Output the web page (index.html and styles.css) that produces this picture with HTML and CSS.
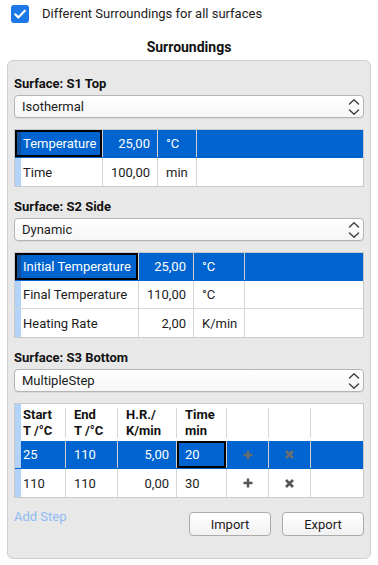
FILE: index.html
```html
<!DOCTYPE html>
<html>
<head>
<meta charset="utf-8">
<link rel="stylesheet" href="styles.css">
</head>
<body>
<div class="top">
  <span class="check"><svg width="18" height="18" viewBox="0 0 18 18"><path d="M4.2 9.3l3.1 3.1 6.5-6.6" fill="none" stroke="#fff" stroke-width="2.2" stroke-linecap="round" stroke-linejoin="round"/></svg></span>
  <span class="check-label">Different Surroundings for all surfaces</span>
</div>
<div class="title">Surroundings</div>
<div class="panel">
  <div class="heading first">Surface: S1 Top</div>
  <div class="select"><span>Isothermal</span><svg class="arrows" width="12" height="18" viewBox="0 0 12 18"><path d="M1.5 6l4.5-4.2 4.5 4.2M1.5 12l4.5 4.2 4.5-4.2" fill="none" stroke="#444" stroke-width="1.5" stroke-linecap="round" stroke-linejoin="round"/></svg></div>
  <div class="table t1">
    <div class="row sel">
      <div class="ind focus-l"></div>
      <div class="cell first focus-r">Temperature</div>
      <div class="cell num">25,00</div>
      <div class="cell">°C</div>
      <div class="cell last"></div>
    </div>
    <div class="row">
      <div class="ind"></div>
      <div class="cell first">Time</div>
      <div class="cell num">100,00</div>
      <div class="cell">min</div>
      <div class="cell last"></div>
    </div>
  </div>

  <div class="heading">Surface: S2 Side</div>
  <div class="select"><span>Dynamic</span><svg class="arrows" width="12" height="18" viewBox="0 0 12 18"><path d="M1.5 6l4.5-4.2 4.5 4.2M1.5 12l4.5 4.2 4.5-4.2" fill="none" stroke="#444" stroke-width="1.5" stroke-linecap="round" stroke-linejoin="round"/></svg></div>
  <div class="table t2">
    <div class="row sel">
      <div class="ind focus-l"></div>
      <div class="cell first focus-r">Initial Temperature</div>
      <div class="cell num">25,00</div>
      <div class="cell">°C</div>
      <div class="cell last"></div>
    </div>
    <div class="row">
      <div class="ind"></div>
      <div class="cell first">Final Temperature</div>
      <div class="cell num">110,00</div>
      <div class="cell">°C</div>
      <div class="cell last"></div>
    </div>
    <div class="row">
      <div class="ind"></div>
      <div class="cell first">Heating Rate</div>
      <div class="cell num">2,00</div>
      <div class="cell">K/min</div>
      <div class="cell last"></div>
    </div>
  </div>

  <div class="heading">Surface: S3 Bottom</div>
  <div class="select"><span>MultipleStep</span><svg class="arrows" width="12" height="18" viewBox="0 0 12 18"><path d="M1.5 6l4.5-4.2 4.5 4.2M1.5 12l4.5 4.2 4.5-4.2" fill="none" stroke="#444" stroke-width="1.5" stroke-linecap="round" stroke-linejoin="round"/></svg></div>
  <div class="table t3">
    <div class="row head">
      <div class="ind"></div>
      <div class="hcell first">Start<br>T /°C</div>
      <div class="hcell">End<br>T /°C</div>
      <div class="hcell">H.R./<br>K/min</div>
      <div class="hcell">Time<br>min</div>
      <div class="hcell"></div>
      <div class="hcell"></div>
      <div class="hcell last"></div>
    </div>
    <div class="row sel">
      <div class="ind"></div>
      <div class="cell first">25</div>
      <div class="cell">110</div>
      <div class="cell num">5,00</div>
      <div class="cell focus">20</div>
      <div class="cell icon"><svg width="10" height="10" viewBox="0 0 10 10"><path d="M5 0.5v9M0.5 5h9" stroke="currentColor" stroke-width="2.4"/></svg></div>
      <div class="cell icon"><svg width="9" height="9" viewBox="0 0 9 9"><path d="M1 1l7 7M8 1l-7 7" stroke="currentColor" stroke-width="2.6"/></svg></div>
      <div class="cell last"></div>
    </div>
    <div class="row">
      <div class="ind"></div>
      <div class="cell first">110</div>
      <div class="cell">110</div>
      <div class="cell num">0,00</div>
      <div class="cell">30</div>
      <div class="cell icon"><svg width="10" height="10" viewBox="0 0 10 10"><path d="M5 0.5v9M0.5 5h9" stroke="currentColor" stroke-width="2.4"/></svg></div>
      <div class="cell icon"><svg width="9" height="9" viewBox="0 0 9 9"><path d="M1 1l7 7M8 1l-7 7" stroke="currentColor" stroke-width="2.6"/></svg></div>
      <div class="cell last"></div>
    </div>
  </div>

  <div class="footer">
    <span class="add-step">Add Step</span>
    <div class="buttons">
      <button class="btn">Import</button>
      <button class="btn">Export</button>
    </div>
  </div>
</div>
</body>
</html>
```

FILE: styles.css
```css
* { box-sizing: border-box; }
body {
  margin: 0;
  font-family: Roboto, "Liberation Sans", sans-serif;
  font-size: 13px;
  color: #1c1c1c;
  background: #fff;
}
.top {
  display: flex;
  align-items: center;
  padding: 5px 0 0 11px;
  height: 23px;
}
.check {
  width: 18px;
  height: 18px;
  border-radius: 3px;
  background: #1c78e6;
  display: flex;
}
.check-label {
  margin-left: 13px;
  line-height: 16px;
  color: #222;
}
.title {
  margin-top: 16px;
  text-align: center;
  font-weight: 700;
  font-size: 14px;
  line-height: 16px;
  color: #111;
}
.panel {
  margin: 5px 7px 0 7px;
  border: 1px solid #cfcfcf;
  border-radius: 6px;
  background: #e8e8e8;
  padding: 15px 6px 22px 6px;
}
.heading {
  font-weight: 700;
  line-height: 16px;
  margin-top: 12px;
  color: #111;
}
.heading.first { margin-top: 0; }
.select {
  margin-top: 3px;
  height: 23px;
  border: 1px solid #b4b4b4;
  border-radius: 4px;
  background: linear-gradient(#ffffff, #f6f6f6);
  box-shadow: 0 1px 0 rgba(0,0,0,0.06);
  display: flex;
  align-items: center;
  justify-content: space-between;
  padding: 0 3px 0 7px;
  color: #1c1c1c;
}
.table {
  margin-top: 11px;
  background: #fff;
  border: 1px solid #c9c9c9;
}
.row {
  display: grid;
  height: 28px;
  border-bottom: 1px solid #d6d6d6;
}
.row:last-child { border-bottom: none; height: 28px; }
.t1 .row { grid-template-columns: 6px 82px 55px 39px 1fr; }
.t2 .row { grid-template-columns: 6px 118px 55px 51px 1fr; }
.t3 .row { grid-template-columns: 6px 45px 52px 59px 50px 42px 42px 1fr; }
.ind { background: #b3d3f9; }
.cell {
  display: flex;
  align-items: center;
  padding: 0 7px 0 8px;
  border-right: 1px solid #d6d6d6;
  white-space: nowrap;
}
.cell.first { padding-left: 2px; }
.cell.num { justify-content: flex-end; }
.cell.last { border-right: none; }
.cell.icon { justify-content: center; padding: 0; color: #555; }
.row.sel { background: #0064d0; color: #fff; border-bottom-color: #0064d0; }
.row.sel .cell { border-right-color: #d0d0d0; }
.row.sel .cell.last { border-right: none; }
.row.sel .cell.icon { color: #6e6e6e; }
.t1 .row.sel .ind, .t2 .row.sel .ind { background: #124f9c; }
.focus-l { box-shadow: inset 2px 0 #000, inset 0 2px #000, inset 0 -2px #000; }
.focus-r { box-shadow: inset -2px 0 #000, inset 0 2px #000, inset 0 -2px #000; }
.row.sel .cell.focus-r { border-right-color: #d0d0d0; }
.cell.focus { box-shadow: inset 0 0 0 2px #000; }
.row.head { height: 37px; border-bottom: none; background: #fff; color: #111; }
.hcell {
  font-weight: 700;
  line-height: 16px;
  padding: 3px 0 0 8px;
  position: relative;
}
.hcell.first { padding-left: 2px; }
.hcell::after {
  content: "";
  position: absolute;
  right: 0;
  top: 4px;
  bottom: 3px;
  width: 1px;
  background: #d6d6d6;
}
.hcell.last::after { display: none; }
.footer {
  margin-top: 11px;
  display: flex;
  justify-content: space-between;
  align-items: flex-start;
}
.add-step {
  line-height: 16px;
  color: #8dbcf3;
}
.buttons {
  display: flex;
  gap: 11px;
  margin-top: 3px;
}
.btn {
  width: 82px;
  height: 24px;
  font-family: Roboto, "Liberation Sans", sans-serif;
  font-size: 13px;
  color: #1c1c1c;
  border: 1px solid #ababab;
  border-radius: 4px;
  background: linear-gradient(#ffffff, #f1f1f1);
  padding: 0;
}
```
